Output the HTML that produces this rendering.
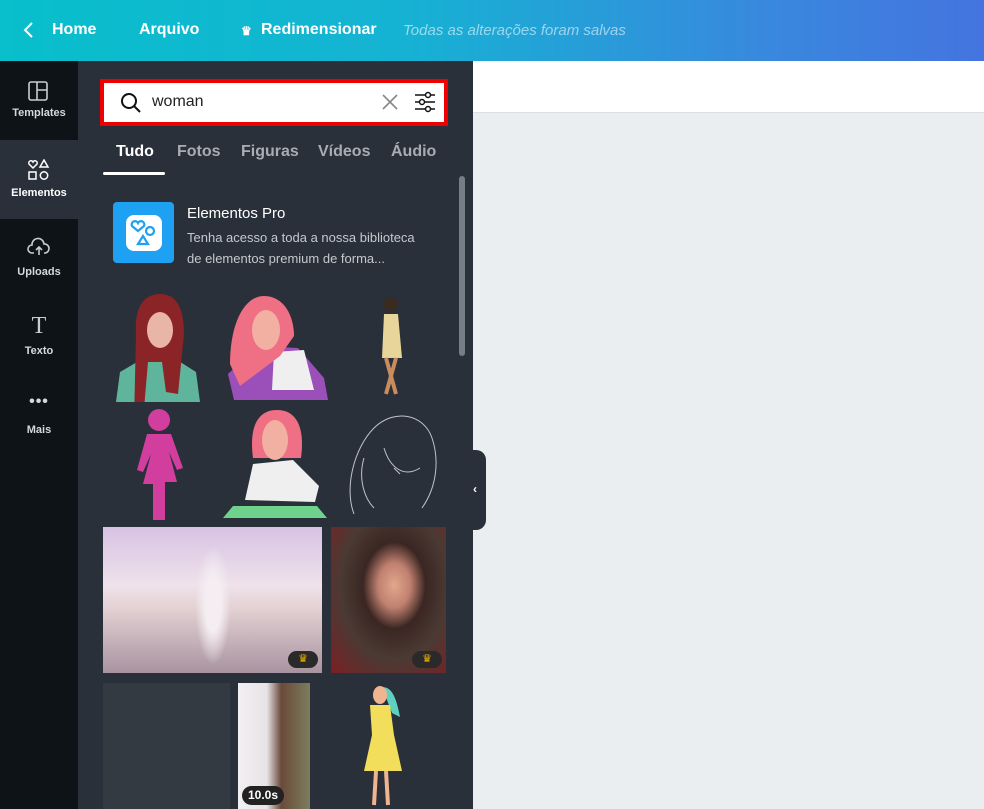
<!DOCTYPE html>
<html><head><meta charset="utf-8"><style>
*{margin:0;padding:0;box-sizing:border-box}
body{width:984px;height:809px;overflow:hidden;font-family:"Liberation Sans",sans-serif;background:#ebeef1;position:relative}
.hdr{position:absolute;left:0;top:0;width:984px;height:61px;background:linear-gradient(90deg,#08bfcb 0%,#15b3d3 40%,#3a86de 80%,#4474df 100%);color:#fff;font-weight:bold;font-size:16px}
.hdr span{position:absolute;top:21px}
.side{position:absolute;left:0;top:61px;width:78px;height:748px;background:#0e1318}
.si{position:absolute;left:0;width:78px;text-align:center;color:#d6d9dc;font-size:11px;font-weight:bold}
.sel{position:absolute;left:0;top:79px;width:78px;height:79px;background:#293039}
.panel{position:absolute;left:78px;top:61px;width:395px;height:748px;background:#293039}
.white{position:absolute;left:473px;top:61px;width:511px;height:52px;background:#fff;border-bottom:1px solid #dde0e3}
.search{position:absolute;left:100px;top:79px;width:348px;height:47px;border:4px solid #e00;background:#fff}
.tabs span{position:absolute;top:143px;color:#a8adb3;font-size:16px;font-weight:bold}
.ph{position:absolute}
</style></head><body>
<div class="hdr">
<svg style="position:absolute;left:22px;top:21px" width="12" height="18"><path d="M10 2L3 9l7 7" stroke="#fff" stroke-width="2" fill="none"/></svg>
<span style="left:52px">Home</span><span style="left:139px">Arquivo</span>
<span style="left:241px;font-size:12px;top:24px">♛</span><span style="left:261px">Redimensionar</span>
<span style="left:403px;font-style:italic;font-weight:normal;color:rgba(255,255,255,.55);font-size:15px;top:22px">Todas as alterações foram salvas</span>
</div>
<div class="side">
<div class="sel"></div>
<svg style="position:absolute;left:28px;top:20px" width="20" height="20"><rect x="1" y="1" width="18" height="18" rx="2" fill="none" stroke="#ccc" stroke-width="1.6"/><path d="M9 1v18M9 9h10" stroke="#ccc" stroke-width="1.6"/></svg>
<div class="si" style="top:46px">Templates</div>
<svg style="position:absolute;left:27px;top:98px" width="24" height="22"><path d="M6 9L2 5a2 2 0 0 1 4-2 2 2 0 0 1 4 2z" fill="none" stroke="#fff" stroke-width="1.5"/><path d="M17 1l4 7h-8z" fill="none" stroke="#fff" stroke-width="1.5"/><rect x="2" y="13" width="7" height="7" fill="none" stroke="#fff" stroke-width="1.5"/><circle cx="17" cy="16.5" r="3.7" fill="none" stroke="#fff" stroke-width="1.5"/></svg>
<div class="si" style="top:126px;color:#fff">Elementos</div>
<svg style="position:absolute;left:27px;top:176px" width="24" height="20"><path d="M7 16H5a4 4 0 0 1 0-8 6 6 0 0 1 12-1 4.5 4.5 0 0 1 1 9h-1M12 18v-8M9 13l3-3 3 3" fill="none" stroke="#ccc" stroke-width="1.6"/></svg>
<div class="si" style="top:205px">Uploads</div>
<div class="si" style="top:252px;font-family:'Liberation Serif',serif;font-weight:normal;font-size:24px;color:#ccc">T</div>
<div class="si" style="top:284px">Texto</div>
<div class="si" style="top:332px;font-size:16px;letter-spacing:1px">•••</div>
<div class="si" style="top:363px">Mais</div>
</div>
<div class="white"></div>
<div class="panel"></div>
<div class="search">
<svg style="position:absolute;left:16px;top:9px" width="22" height="22"><circle cx="9" cy="9" r="7" fill="none" stroke="#111" stroke-width="2"/><path d="M14 14l6 6" stroke="#111" stroke-width="2"/></svg>
<span style="position:absolute;left:48px;top:10px;font-size:16px;color:#222">woman</span>
<svg style="position:absolute;left:278px;top:11px" width="16" height="16"><path d="M1 1l14 14M15 1L1 15" stroke="#888" stroke-width="1.6"/></svg>
<svg style="position:absolute;left:310px;top:8px" width="22" height="22"><path d="M1 4h20M1 11h20M1 18h20" stroke="#111" stroke-width="1.6"/><circle cx="14" cy="4" r="2.5" fill="#fff" stroke="#111" stroke-width="1.5"/><circle cx="8" cy="11" r="2.5" fill="#fff" stroke="#111" stroke-width="1.5"/><circle cx="14" cy="18" r="2.5" fill="#fff" stroke="#111" stroke-width="1.5"/></svg>
</div>
<div class="tabs"><span style="left:116px;color:#fff">Tudo</span><span style="left:177px">Fotos</span><span style="left:241px">Figuras</span><span style="left:318px">Vídeos</span><span style="left:391px">Áudio</span></div>
<div style="position:absolute;left:103px;top:172px;width:62px;height:3px;background:#fff;border-radius:2px"></div>
<div style="position:absolute;left:459px;top:176px;width:6px;height:180px;background:#777d85;border-radius:3px"></div>
<div style="position:absolute;left:113px;top:202px;width:61px;height:61px;background:#1ea1f2;border-radius:4px"></div>
<svg style="position:absolute;left:124px;top:213px" width="40" height="40"><rect x="2" y="2" width="36" height="36" rx="8" fill="#fff"/><path d="M14 18l-6-5a3 3 0 0 1 6-3 3 3 0 0 1 6 3z" fill="none" stroke="#1ea1f2" stroke-width="2.2"/><circle cx="26" cy="18" r="4" fill="none" stroke="#1ea1f2" stroke-width="2.2"/><path d="M19 23l5 8h-10z" fill="none" stroke="#1ea1f2" stroke-width="2.2"/></svg>
<div style="position:absolute;left:187px;top:205px;color:#fff;font-size:15px">Elementos Pro</div>
<div style="position:absolute;left:187px;top:227px;color:#c5c9ce;font-size:13px;line-height:21px">Tenha acesso a toda a nossa biblioteca<br>de elementos premium de forma...</div>
<svg class="ph" style="left:116px;top:294px" width="84" height="108"><path d="M0 108l4-30 24-14h30l22 14 4 30z" fill="#5fb49c"/><path d="M20 40c-2-30 10-40 24-40s24 10 24 40l-6 60-12-2-4-30h-14l-6 70-8-10z" fill="#8a2426"/><ellipse cx="44" cy="36" rx="13" ry="18" fill="#e9b5a6"/></svg>
<svg class="ph" style="left:224px;top:294px" width="106" height="108"><path d="M4 80l30-28 40 2 26 30 4 22H10z" fill="#9b4fb9"/><path d="M50 58l30-2 10 40H48z" fill="#efefef"/><path d="M6 70c0-40 14-68 34-68s30 20 30 40l-14 20-40 30z" fill="#ef6f85"/><ellipse cx="42" cy="36" rx="14" ry="20" fill="#f2b0a2"/></svg>
<svg class="ph" style="left:374px;top:294px" width="36" height="106"><circle cx="17" cy="10" r="7" fill="#3a2a20"/><path d="M10 20h14l4 44H8z" fill="#e8d59a"/><path d="M12 64l10 36M22 64L12 100" stroke="#c98c5c" stroke-width="4"/></svg>
<svg class="ph" style="left:133px;top:408px" width="52" height="112"><circle cx="26" cy="12" r="11" fill="#d23e9e"/><path d="M14 26h24l12 34-6 2-8-18 8 30H32v38h-6V76h-0v38h-6V76H10l8-30-8 18-6-2z" fill="#d23e9e"/></svg>
<svg class="ph" style="left:223px;top:408px" width="104" height="110"><path d="M30 50c-4-30 4-48 24-48s28 18 24 48z" fill="#ef6f85"/><ellipse cx="52" cy="32" rx="13" ry="20" fill="#f2b0a2"/><path d="M22 92l8-36 40-4 26 26-4 16z" fill="#efefef"/><path d="M0 110l10-12h84l10 12z" fill="#6fd28c"/></svg>
<svg class="ph" style="left:344px;top:408px" width="94" height="110" fill="none" stroke="#bfc4c8" stroke-width="1"><path d="M30 20c20-20 50-14 58 10s4 50-10 70M30 20c-20 20-30 60-20 86M40 40c6 20 20 30 36 20M50 60l6 6M20 50c-6 20 0 40 10 50"/></svg>
<div class="ph" style="left:103px;top:527px;width:219px;height:146px;background:linear-gradient(180deg,#d7c2e4 0%,#efe2ea 40%,#e4d2d4 55%,#a893a0 100%)"></div>
<div class="ph" style="left:195px;top:545px;width:36px;height:120px;background:radial-gradient(ellipse at center,#f4eef2 30%,rgba(220,210,220,0) 70%)"></div>
<div class="ph" style="left:288px;top:651px;width:30px;height:17px;background:#2a2a2a;border-radius:9px;color:#f5b400;font-size:11px;text-align:center;line-height:17px">♛</div>
<div class="ph" style="left:331px;top:527px;width:115px;height:146px;background:radial-gradient(ellipse at 55% 40%,#e0a88c 0%,#c08070 18%,#3a2622 35%,#4b3a34 60%,#7b1f24 100%)"></div>
<div class="ph" style="left:412px;top:651px;width:30px;height:17px;background:#2a2a2a;border-radius:9px;color:#f5b400;font-size:11px;text-align:center;line-height:17px">♛</div>
<div class="ph" style="left:103px;top:683px;width:127px;height:126px;background:#333a42"></div>
<div class="ph" style="left:238px;top:683px;width:72px;height:126px;background:linear-gradient(90deg,#f2eff2 0%,#e8e3e6 40%,#6b4a3a 60%,#7c7d5e 100%)"></div>
<div class="ph" style="left:242px;top:786px;width:42px;height:19px;background:#222;border-radius:10px;color:#fff;font-size:12px;font-weight:bold;text-align:center;line-height:19px">10.0s</div>
<svg class="ph" style="left:356px;top:683px" width="52" height="126"><path d="M26 4c10 0 14 10 18 30l-8-4z" fill="#5fd0bf"/><ellipse cx="24" cy="12" rx="7" ry="9" fill="#f0b490"/><path d="M14 22h20l4 30 8 36H8l8-36z" fill="#f2de5a"/><path d="M20 88l-2 34M30 88l2 34" stroke="#f0b490" stroke-width="4"/></svg>
<div class="ph" style="left:473px;top:450px;width:13px;height:80px;background:#293039;border-radius:0 10px 10px 0"></div>
<div class="ph" style="left:473px;top:482px;color:#fff;font-size:12px;font-weight:bold">‹</div>
</body></html>
